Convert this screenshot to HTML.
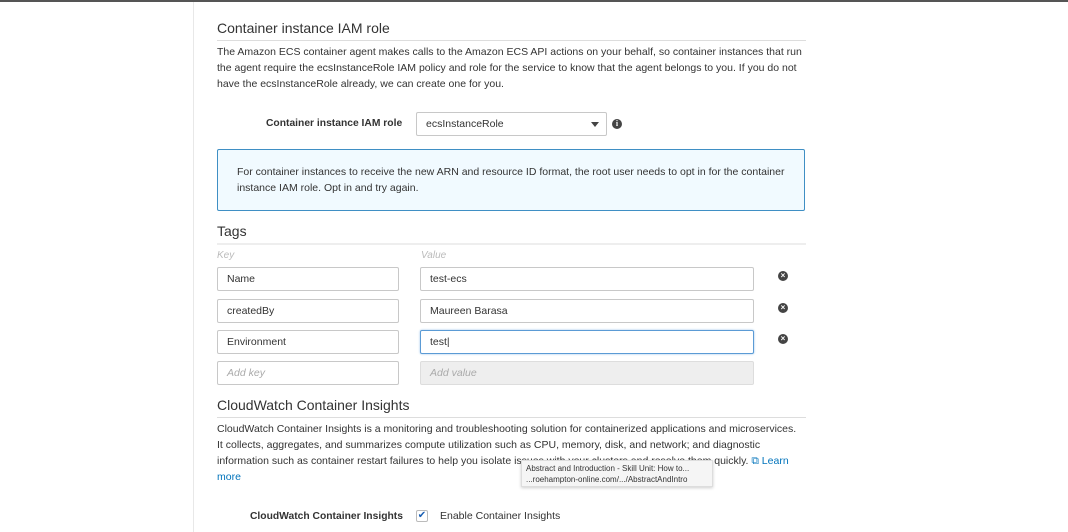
<!DOCTYPE html>
<html><head><style>
*{margin:0;padding:0;box-sizing:border-box}
body{width:1068px;height:532px;overflow:hidden;background:#fff;font-family:"Liberation Sans",Arial,sans-serif;color:#222;position:relative;font-size:10.5px}
.a{position:absolute;white-space:nowrap}
.h{font-size:14px;color:#333}
.hr{position:absolute;left:217px;width:589px;height:1px;background:#ddd}
.p{position:absolute;left:217px;line-height:16px;font-size:10.5px;color:#333}
.in{position:absolute;height:24px;border:1px solid #c8c8c8;border-radius:2px;background:#fff;padding-left:9px;line-height:22px;font-size:10.5px;color:#333}
.x{position:absolute;width:10px;height:10px;border-radius:50%;background:#444;color:#fff;font-size:8px;line-height:10px;text-align:center;font-weight:bold}
</style></head><body>
<div class="a" style="left:0;top:0;width:1068px;height:2px;background:#555"></div>
<div class="a" style="left:193px;top:2px;width:1px;height:530px;background:#e8e8e8"></div>
<div class="a h" style="left:217px;top:20px">Container instance IAM role</div>
<div class="hr" style="top:40px"></div>
<div class="p" style="top:44px">The Amazon ECS container agent makes calls to the Amazon ECS API actions on your behalf, so container instances that run<br>the agent require the ecsInstanceRole IAM policy and role for the service to know that the agent belongs to you. If you do not<br>have the ecsInstanceRole already, we can create one for you.</div>
<div class="a" style="left:266px;top:118px;font-weight:bold;color:#333;font-size:10.3px">Container instance IAM role</div>
<div class="in" style="left:416px;top:112px;width:191px">ecsInstanceRole<span style="position:absolute;right:7px;top:9px;border-left:4px solid transparent;border-right:4px solid transparent;border-top:5px solid #444"></span></div>
<div class="x" style="left:612px;top:119px;font-family:'Liberation Serif',serif">i</div>
<div class="a" style="left:217px;top:149px;width:588px;height:62px;background:#f1faff;border:1px solid #3f8fc4;border-radius:2px"></div>
<div class="p" style="left:237px;top:164px">For container instances to receive the new ARN and resource ID format, the root user needs to opt in for the container<br>instance IAM role. Opt in and try again.</div>
<div class="a h" style="left:217px;top:223px">Tags</div>
<div class="hr" style="top:243px;height:2px;background:#eee"></div>
<div class="a" style="left:217px;top:250px;font-style:italic;color:#bbb;font-size:10px">Key</div>
<div class="a" style="left:421px;top:250px;font-style:italic;color:#bbb;font-size:10px">Value</div>
<div class="in" style="left:217px;top:267px;width:182px">Name</div>
<div class="in" style="left:420px;top:267px;width:334px">test-ecs</div>
<div class="x" style="left:778px;top:271px">×</div>
<div class="in" style="left:217px;top:299px;width:182px">createdBy</div>
<div class="in" style="left:420px;top:299px;width:334px">Maureen Barasa</div>
<div class="x" style="left:778px;top:303px">×</div>
<div class="in" style="left:217px;top:330px;width:182px">Environment</div>
<div class="in" style="left:420px;top:330px;width:334px;border-color:#5b9bd5;box-shadow:0 0 2px #9cc3ea">test|</div>
<div class="x" style="left:778px;top:334px">×</div>
<div class="in" style="left:217px;top:361px;width:182px;font-style:italic;color:#aaa">Add key</div>
<div class="in" style="left:420px;top:361px;width:334px;font-style:italic;color:#aaa;background:#eee;border-color:#ddd">Add value</div>
<div class="a h" style="left:217px;top:397px">CloudWatch Container Insights</div>
<div class="hr" style="top:417px"></div>
<div class="p" style="top:421px">CloudWatch Container Insights is a monitoring and troubleshooting solution for containerized applications and microservices.<br>It collects, aggregates, and summarizes compute utilization such as CPU, memory, disk, and network; and diagnostic<br>information such as container restart failures to help you isolate issues with your clusters and resolve them quickly. <span style="color:#0073bb">⧉ Learn</span><br><span style="color:#0073bb">more</span></div>
<div class="a" style="left:521px;top:460px;width:192px;height:27px;background:#f5f5f5;border:1px solid #ddd;box-shadow:0 1px 3px rgba(0,0,0,.2);font-size:8px;line-height:11px;padding:2px 4px;color:#333">Abstract and Introduction - Skill Unit: How to...<br>...roehampton-online.com/.../AbstractAndIntro</div>
<div class="a" style="left:250px;top:511px;font-weight:bold;color:#333;font-size:10.3px">CloudWatch Container Insights</div>
<div class="a" style="left:416px;top:510px;width:12px;height:12px;border:1px solid #bbb;border-radius:2px;color:#1a5fb4;font-size:10px;line-height:10px;text-align:center">✔</div>
<div class="a" style="left:440px;top:510px;color:#333">Enable Container Insights</div>
</body></html>
